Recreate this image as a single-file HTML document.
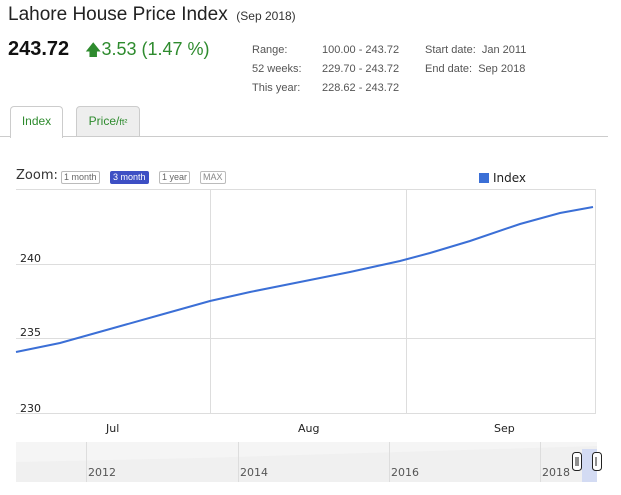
<!DOCTYPE html>
<html><head><style>
body{margin:0;width:621px;height:495px;background:#fff;font-family:"Liberation Sans",Arial,sans-serif;position:relative;overflow:hidden}
.a{position:absolute;white-space:nowrap}
.g{color:#555;font-size:11px}
</style></head><body>
<div class="a" style="left:8px;top:4px;font-size:19px;color:#222">Lahore House Price Index <span style="font-size:12px;color:#333">&nbsp;(Sep 2018)</span></div>
<div class="a" style="left:8px;top:38px;font-size:20px;font-weight:bold;color:#111">243.72</div>
<div class="a" style="left:85px;top:39px;font-size:18px;color:#2e8b2e"><span style="font-size:16px">&#129093;</span>3.53 (1.47 %)</div>
<div class="a g" style="left:252px;top:44px">Range:</div>
<div class="a g" style="left:252px;top:63px">52 weeks:</div>
<div class="a g" style="left:252px;top:82px">This year:</div>
<div class="a g" style="left:322px;top:44px">100.00 - 243.72</div>
<div class="a g" style="left:322px;top:63px">229.70 - 243.72</div>
<div class="a g" style="left:322px;top:82px">228.62 - 243.72</div>
<div class="a g" style="left:425px;top:44px">Start date: &nbsp;Jan 2011</div>
<div class="a g" style="left:425px;top:63px">End date: &nbsp;Sep 2018</div>
<div class="a" style="left:0;top:136px;width:608px;height:1px;background:#ccc"></div>
<div class="a" style="left:10px;top:106px;width:51px;height:31px;border:1px solid #ccc;border-bottom:none;border-radius:4px 4px 0 0;background:#fff;color:#2e8b2e;font-size:12px;text-align:center;line-height:28px">Index</div>
<div class="a" style="left:76px;top:106px;width:62px;height:29px;border:1px solid #ccc;border-radius:4px 4px 0 0;background:#eee;color:#2e8b2e;font-size:12px;text-align:center;line-height:28px">Price/<span style="font-size:9px">ft²</span></div>
<div class="a" style="left:16px;top:168px;font-size:13px;color:#333;font-family:'DejaVu Sans',sans-serif">Zoom:</div>
<div class="a" style="left:61px;top:171px;font-size:9px;color:#666;border:1px solid #bbb;border-radius:2px;padding:0 2px;height:11px;line-height:11px">1 month</div>
<div class="a" style="left:110px;top:171px;font-size:9px;color:#fff;background:#3d4fc4;border:1px solid #3d4fc4;border-radius:2px;padding:0 2px;height:11px;line-height:11px">3 month</div>
<div class="a" style="left:159px;top:171px;font-size:9px;color:#666;border:1px solid #bbb;border-radius:2px;padding:0 2px;height:11px;line-height:11px">1 year</div>
<div class="a" style="left:200px;top:171px;font-size:9px;color:#888;border:1px solid #bbb;border-radius:2px;padding:0 2px;height:11px;line-height:11px">MAX</div>
<div class="a" style="left:479px;top:173px;width:10px;height:10px;background:#3b6fd6"></div>
<div class="a" style="left:493px;top:171px;font-size:12px;color:#222;font-family:'DejaVu Sans',sans-serif">Index</div>
<svg class="a" style="left:0;top:0" width="621" height="495">
<g stroke="#ddd" fill="none">
<line x1="16" y1="189.5" x2="596" y2="189.5"/>
<line x1="16" y1="264.5" x2="596" y2="264.5"/>
<line x1="16" y1="338.5" x2="596" y2="338.5"/>
<line x1="16" y1="413.5" x2="596" y2="413.5"/>
<line x1="210.5" y1="189" x2="210.5" y2="413"/>
<line x1="406.5" y1="189" x2="406.5" y2="413"/>
<line x1="595.5" y1="189" x2="595.5" y2="413"/>
</g>
<path d="M16 352 L60 343 L110 329 L160 315 L210 301 L250 292 L300 282 L350 272 L400 261 L430 253 L470 241 L520 224 L560 213 L593 207" stroke="#3b6fd6" stroke-width="2" fill="none"/>
<g font-size="11" fill="#222" font-family="DejaVu Sans,sans-serif">
<text x="20" y="262">240</text><text x="20" y="336">235</text><text x="20" y="412">230</text>
<text x="106" y="432">Jul</text><text x="298" y="432">Aug</text><text x="494" y="432">Sep</text>
</g>
<rect x="16" y="442" width="581" height="40" fill="#f5f5f5"/>
<path d="M16 462 L200 458 L400 452 L597 446 L597 482 L16 482Z" fill="#f0f0f0"/>
<rect x="582" y="449" width="15" height="33" fill="#d3dbf3"/>
<g stroke="#ddd"><line x1="86.5" y1="442" x2="86.5" y2="482"/><line x1="238.5" y1="442" x2="238.5" y2="482"/><line x1="389.5" y1="442" x2="389.5" y2="482"/><line x1="540.5" y1="442" x2="540.5" y2="482"/></g>
<g font-size="11" fill="#555" font-family="DejaVu Sans,sans-serif">
<text x="88" y="476">2012</text><text x="240" y="476">2014</text><text x="391" y="476">2016</text><text x="542" y="476">2018</text>
</g>
<rect x="572.5" y="452.5" width="9" height="18" rx="3" fill="#fff" stroke="#222"/>
<line x1="576" y1="457" x2="576" y2="466" stroke="#222"/><line x1="578" y1="457" x2="578" y2="466" stroke="#222"/>
<rect x="592.5" y="452.5" width="9" height="18" rx="3" fill="#fff" stroke="#222"/>
<line x1="596" y1="457" x2="596" y2="466" stroke="#222"/>
</svg>
</body></html>
